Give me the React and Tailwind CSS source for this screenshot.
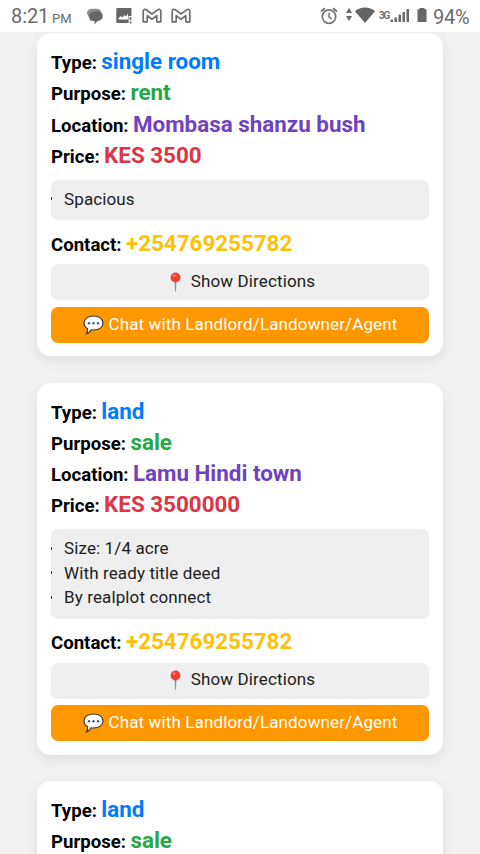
import clsx from 'clsx'

const listings = [
  {
    type: 'single room',
    purpose: 'rent',
    location: 'Mombasa shanzu bush',
    price: 'KES 3500',
    features: ['Spacious'],
    contact: '+254769255782',
    className: 'h-[323px] mb-[26.5px]',
  },
  {
    type: 'land',
    purpose: 'sale',
    location: 'Lamu Hindi town',
    price: 'KES 3500000',
    features: ['Size: 1/4 acre', 'With ready title deed', 'By realplot connect'],
    contact: '+254769255782',
    className: 'h-[372px] mb-[26.2px]',
  },
  {
    type: 'land',
    purpose: 'sale',
    className: 'h-[323px]',
  },
]

function GmailIcon() {
  return (
    <svg width="20" height="16" viewBox="0 0 20 16" fill="none" stroke="#6e6e6e" strokeWidth="1.7" strokeLinejoin="round">
      <path d="M1.2 3.2v10.6h4V7.6L10 11.2l4.8-3.6v6.2h4V3.2c0-1.8-1.9-2.4-3.2-1.4L10 6 4.4 1.8C3.1.8 1.2 1.4 1.2 3.2z" />
    </svg>
  )
}

function StatusBar() {
  return (
    <div className="relative z-10 flex h-8 shrink-0 items-center bg-white pl-[11px] pr-[10px] text-[#6a6a6a]">
      <span className="w-[37px] pt-px text-[20px] leading-[31px] tracking-[-0.1px]">8:21</span>
      <span className="ml-1 w-5 pt-[5px] text-[13px] leading-[27px]">PM</span>

      {/* Notifications */}
      <svg className="ml-[14px]" width="18" height="17" viewBox="0 0 17 17">
        <path d="M5 .8h5.500a5 5 0 0 1 4.500 4.500v2.500L3.500 13V10C-.8 6.500-.5 1.500 5 .8z" fill="#8c8c8c" />
        <path d="M9.300 3.200c4.200 0 7 2 7 5 0 2.600-2.200 4.500-5.300 4.900L8 16.500v-3.400c-3.200-.2-5.400-2-5.400-4.700 0-3 2.700-5.200 6.700-5.200z" fill="#666" />
      </svg>
      <svg className="ml-3" width="16" height="16" viewBox="0 0 16 16">
        <path d="M1.500 0h13q1 0 1 1v7h-3v7h-11Q.3 15 .3 13.800V1.200Q.3 0 1.500 0z" fill="#666" />
        <path d="M2.500 11.500v-1.500L5 8l1.500 1.500L8.500 7 10 8.500l2-3v6z" fill="#fff" />
        <path d="M14.500 9v3.200M14.500 13.500v2" stroke="#666" strokeWidth="1.600" />
      </svg>
      <span className="ml-[10px]"><GmailIcon /></span>
      <span className="ml-[9px]"><GmailIcon /></span>

      <div className="ml-auto flex items-center">
        <svg width="18" height="18" viewBox="0 0 18 18" fill="none" stroke="#757575" strokeWidth="1.700">
          <circle cx="9" cy="9.600" r="6.700" />
          <path d="M1 4.600 4.800 1.200M17 4.600l-3.800-3.400" strokeWidth="2" />
          <path d="M9 5.800V10l2.800 1.800" strokeWidth="1.500" />
        </svg>
        <svg className="mb-[3px] ml-2" width="6" height="15" viewBox="0 0 6 15" fill="#666">
          <path d="M0 6 3 1l3 5zM0 9l3 5 3-5z" />
        </svg>
        <svg className="mb-[2px] ml-[3px]" width="20" height="16" viewBox="0 0 20 16" fill="#636363">
          <path d="M0 4.200C5.500-.7 14.500-.7 20 4.200L10 16z" />
        </svg>
        <span className="ml-[4px] w-[11px] text-[10px] font-semibold leading-none tracking-[-1.3px]">3G</span>
        <svg width="20" height="14" viewBox="0 0 20 14" fill="#6a6a6a">
          <path d="M.5 10.500H3V13H.5zM4.500 8.500H7V13H4.500zM8.500 5.500H11V13H8.500zM12.500 3H15v10h-2.500zM16.500 0H19v13h-2.500z" />
        </svg>
        <svg className="mb-[2px] ml-[7px]" width="10" height="14" viewBox="0 0 10 14" fill="#666">
          <path d="M2.500 0h5v1.200H9.500V14H.5V1.200h2z" />
        </svg>
        <span className="ml-[6px] w-[37px] whitespace-nowrap pt-[2px] text-[20px] leading-[30px] tracking-[-0.2px]">94%</span>
      </div>
    </div>
  )
}

function Field({ label, value, color }) {
  return (
    <p className="flex h-[31.3px] items-baseline whitespace-nowrap text-[18.6px] font-bold leading-[29.2px] text-black">
      {label}:
      <span className={clsx('ml-[4.4px] text-[22.4px]', color)}>{value}</span>
    </p>
  )
}

function PinIcon() {
  return (
    <svg width="21" height="20" viewBox="0 0 21 20">
      <path d="M9.600 9h1.800l-.4 10.500h-1z" fill="#7c9aa8" />
      <circle cx="10.500" cy="5.500" r="4.900" fill="#ef4136" />
      <ellipse cx="9" cy="3.600" rx="1.600" ry="1.200" fill="#ff8177" />
    </svg>
  )
}

function ChatIcon() {
  return (
    <svg width="21" height="20" viewBox="0 0 21 20">
      <path
        d="M10.500 1C16 1 20 3.700 20 8s-4 7-9.500 7c-.8 0-1.600 0-2.300-.2-.9 1.900-2.400 3.400-4.500 4 .8-1.300 1.200-3 .9-5.200C2.200 12.400 1 10.500 1 8c0-4.300 4-7 9.500-7z"
        fill="#fff"
        stroke="#3d3935"
        strokeWidth="1.200"
      />
      <g fill="#455a74">
        <circle cx="6" cy="8.300" r="1.200" />
        <circle cx="10.500" cy="8.300" r="1.200" />
        <circle cx="15" cy="8.300" r="1.200" />
      </g>
    </svg>
  )
}

function ListingDetails({ listing }) {
  return (
    <>
      <Field label="Location" value={listing.location} color="text-[#6f42c1]" />
      <Field label="Price" value={listing.price} color="text-[#dc3545]" />

      {/* Features */}
      <ul className="mt-[7.6px] overflow-hidden rounded-[7px] bg-[#efefef] pb-[9.2px] pt-[6.8px] text-[17px] leading-[24.4px] text-[#1c1c1c]">
        {listing.features.map((feature) => (
          <li key={feature} className="flex items-center tracking-[0.12px]">
            <span className="-ml-[2px] mr-3 size-[3px] rounded-full bg-black" />
            {feature}
          </li>
        ))}
      </ul>

      <div className="mb-[4.5px] mt-[8.3px]">
        <Field label="Contact" value={listing.contact} color="text-[#ffc107]" />
      </div>

      {/* Actions */}
      <button className="flex h-9 w-full items-center justify-center rounded-[7px] bg-[#efefef] pb-px text-[17px] tracking-[0.12px] text-[#1c1c1c]">
        <PinIcon />
        <span className="ml-[5px]">Show Directions</span>
      </button>
      <button className="mt-[6.5px] flex h-9 w-full items-center justify-center rounded-[7px] bg-[#ff9800] text-[17px] tracking-[0.13px] text-white">
        <ChatIcon />
        <span className="ml-[5px]">Chat with Landlord/Landowner/Agent</span>
      </button>
    </>
  )
}

function ListingCard({ listing }) {
  return (
    <div className={clsx('shrink-0 rounded-[14px] bg-white p-[14px] shadow-[0_5px_14px_rgba(0,0,0,0.08)]', listing.className)}>
      <Field label="Type" value={listing.type} color="text-[#007bff]" />
      <Field label="Purpose" value={listing.purpose} color="text-[#28a745]" />
      {listing.location && <ListingDetails listing={listing} />}
    </div>
  )
}

export default function App() {
  return (
    <div className="flex h-[854px] w-[480px] flex-col overflow-hidden bg-[#f2f2f2] font-['Roboto',sans-serif]">
      <StatusBar />
      <main className="flex flex-col px-[37px] pt-[1.1px]">
        {listings.map((listing, i) => (
          <ListingCard key={i} listing={listing} />
        ))}
      </main>
    </div>
  )
}
